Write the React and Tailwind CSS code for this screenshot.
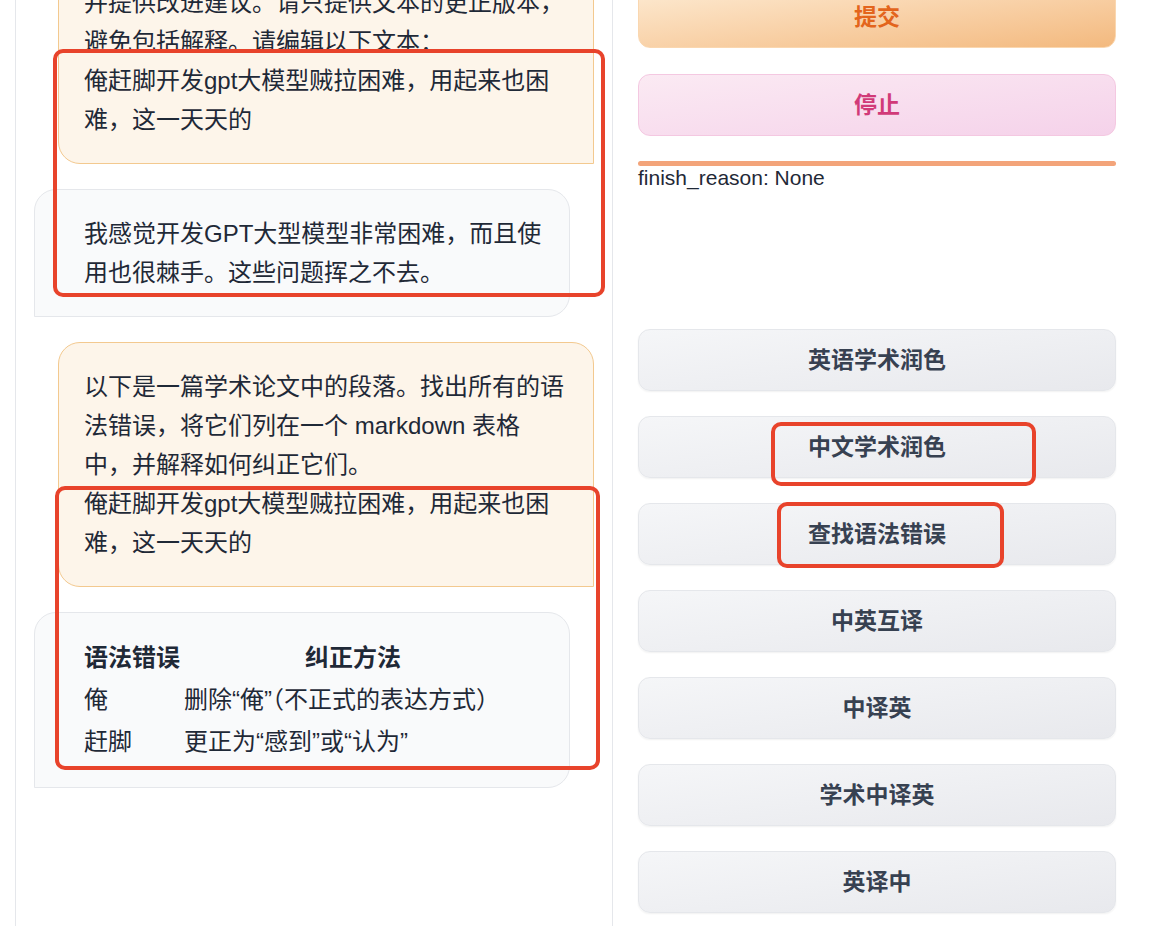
const font = "font-['Liberation_Sans','Noto_Sans_CJK_SC',sans-serif]";

function UserBubble({ children, className = "" }) {
  return (
    <div
      className={`ml-[42px] w-[536px] rounded-[22px] rounded-br-none border border-[#f3c98f] bg-[#fdf5ea] pl-[25px] pr-[28px] py-[24px] text-[24px] leading-[39px] text-[#1f2937] ${className}`}
    >
      {children}
    </div>
  );
}

function BotBubble({ children }) {
  return (
    <div className="ml-[18px] w-[536px] rounded-[22px] rounded-bl-none border border-[#e5e7eb] bg-[#f9fafb] pl-[49px] pr-[18px] py-[24px] text-[24px] leading-[39px] text-[#1f2937]">
      {children}
    </div>
  );
}

function GrayButton({ label }) {
  return (
    <button className="flex h-[62px] w-[478px] items-center justify-center rounded-[12px] border border-[#e5e7eb] bg-linear-to-br from-[#f5f6f8] to-[#e8e9ed] text-[23px] font-bold text-[#374151] shadow-[0_1px_2px_rgba(0,0,0,0.06)]">
      {label}
    </button>
  );
}

function Mark({ className }) {
  return <div className={`pointer-events-none absolute rounded-[10px] border-[4px] border-[#e8432b] ${className}`} />;
}

export default function App() {
  const tools = ["英语学术润色", "中文学术润色", "查找语法错误", "中英互译", "中译英", "学术中译英", "英译中"];

  return (
    <div className={`relative flex h-[926px] w-[1164px] overflow-hidden bg-white ${font}`}>
      <div className="w-[15px] shrink-0" />

      {/* chat */}
      <div className="flex h-full w-[598px] shrink-0 flex-col gap-[25px] border-x border-[#e5e7eb]">
        <UserBubble className="-mt-[42px]">
          <p>并提供改进建议。请只提供文本的更正版本，避免包括解释。请编辑以下文本：</p>
          <p>俺赶脚开发gpt大模型贼拉困难，用起来也困难，这一天天的</p>
        </UserBubble>

        <BotBubble>
          <p>我感觉开发GPT大型模型非常困难，而且使用也很棘手。这些问题挥之不去。</p>
        </BotBubble>

        <UserBubble>
          <p>以下是一篇学术论文中的段落。找出所有的语法错误，将它们列在一个 markdown 表格中，并解释如何纠正它们。</p>
          <p>俺赶脚开发gpt大模型贼拉困难，用起来也困难，这一天天的</p>
        </UserBubble>

        <BotBubble>
          <div className="grid grid-cols-[100px_338px] leading-[42px]">
            <div className="font-bold">语法错误</div>
            <div className="text-center font-bold">纠正方法</div>
            <div>俺</div>
            <div>删除“俺”（不正式的表达方式）</div>
            <div>赶脚</div>
            <div>更正为“感到”或“认为”</div>
          </div>
        </BotBubble>
      </div>

      {/* controls */}
      <div className="flex w-[478px] shrink-0 flex-col pl-[25px] box-content">
        <button className="-mt-[14px] flex h-[62px] w-[478px] items-center justify-center rounded-[12px] border border-[#fad7b0] bg-linear-to-br from-[#fdebd3] to-[#f3b97e] text-[23px] font-bold text-[#e3651c]">
          提交
        </button>
        <button className="mt-[26px] flex h-[62px] w-[478px] items-center justify-center rounded-[12px] border border-[#f4c8e1] bg-linear-to-br from-[#fbeaf3] to-[#f5d2ea] text-[23px] font-bold text-[#d13a78]">
          停止
        </button>
        <div className="mt-[25px] h-[5px] w-[478px] rounded-full bg-[#f3a47a]" />
        <div className="text-[21px] leading-[24px] text-[#1f2937]">finish_reason: None</div>

        <div className="mt-[139px] flex flex-col gap-[25px]">
          {tools.map((t) => (
            <GrayButton key={t} label={t} />
          ))}
        </div>
      </div>

      <Mark className="left-[53px] top-[49px] h-[248px] w-[552px]" />
      <Mark className="left-[55px] top-[486px] h-[284px] w-[545px]" />
      <Mark className="left-[771px] top-[422px] h-[64px] w-[265px]" />
      <Mark className="left-[777px] top-[502px] h-[66px] w-[227px]" />
    </div>
  );
}
